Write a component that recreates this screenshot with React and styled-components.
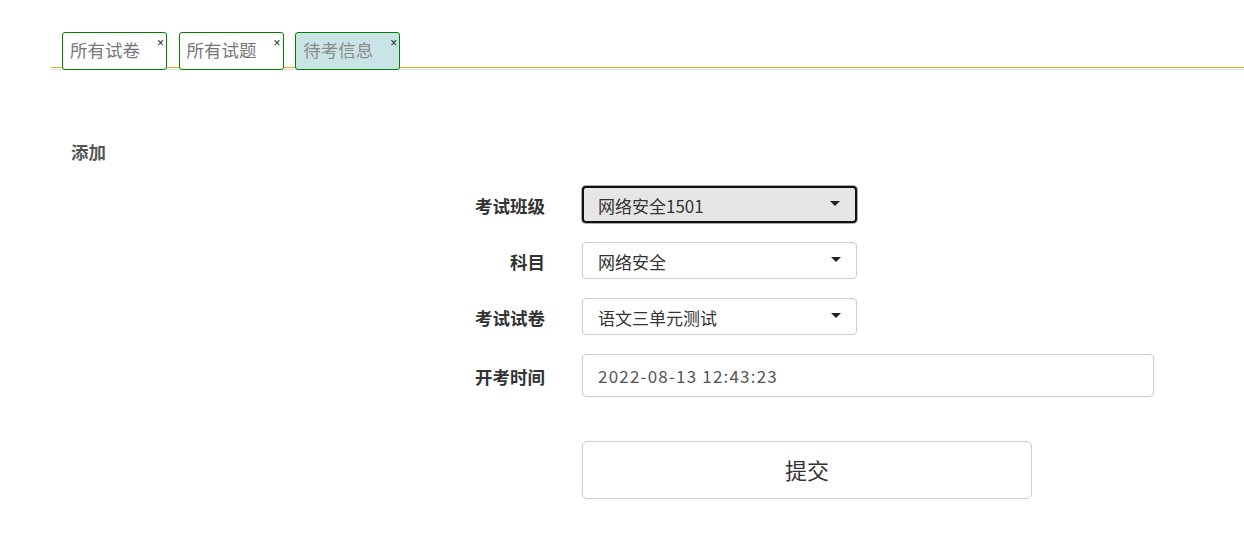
import React from "react";
import styled, { createGlobalStyle } from "styled-components";

const tabs = [
    { id: 1, name: "所有试卷" },
    { id: 2, name: "所有试题" },
    { id: 3, name: "待考信息", active: true },
];

const fields = [
    { label: "考试班级", value: "网络安全1501", focused: true },
    { label: "科目", value: "网络安全" },
    { label: "考试试卷", value: "语文三单元测试" },
];

export default function App() {
    return (
        <Page>
            <GlobalStyle />
            <TabBar>
                {tabs.map((tab) => (
                    <Tab key={tab.id} active={tab.active}>
                        {tab.name}
                        <Close>×</Close>
                    </Tab>
                ))}
            </TabBar>
            <Rule />
            <Heading>添加</Heading>
            <Form>
                {fields.map((field) => (
                    <Row key={field.label}>
                        <Label>{field.label}</Label>
                        <Select focused={field.focused}>
                            {field.value}
                            <Caret />
                        </Select>
                    </Row>
                ))}
                <Row>
                    <Label>开考时间</Label>
                    <DateInput>2022-08-13 12:43:23</DateInput>
                </Row>
                <Row>
                    <span />
                    <Submit type="button">提交</Submit>
                </Row>
            </Form>
        </Page>
    );
}

const GlobalStyle = createGlobalStyle`
    body {
        margin: 0;
        background: #fff;
        font-family: "Noto Sans CJK SC", "Noto Sans", sans-serif;
    }
`;

const Page = styled.div`
    width: 1244px;
    height: 553px;
    overflow: hidden;
    padding-top: 32px;
    box-sizing: border-box;
`;

const TabBar = styled.div`
    display: flex;
    gap: 11.6px;
    margin-left: 51px;
    padding-left: 11px;
    height: 35px;
    border-bottom: 1px solid #f0a81c;
`;

const Tab = styled.div`
    position: relative;
    z-index: 1;
    box-sizing: border-box;
    width: 105px;
    height: 38px;
    padding: 5px 0 0 7px;
    border: 1px solid #008000;
    border-radius: 3px;
    background: ${({ active }) => (active ? "#c8e4e6" : "#fff")};
    color: ${({ active }) => (active ? "#8a8a8a" : "#777")};
    font-size: 17.5px;
    line-height: 24px;
`;

const Close = styled.span`
    position: absolute;
    top: 4px;
    right: 2px;
    font-family: "Liberation Sans", sans-serif;
    font-size: 12px;
    line-height: 12px;
    color: #222;
`;

const Rule = styled.div`
    margin: 1px 0 0 51px;
    height: 1px;
    background: #e0e0e0;
`;

const Heading = styled.div`
    margin: 71px 0 0 71px;
    font-size: 17.5px;
    font-weight: bold;
    color: #555;
    line-height: 22px;
`;

const Form = styled.div`
    display: grid;
    row-gap: 19px;
    margin-top: 23px;
`;

const Row = styled.div`
    display: grid;
    grid-template-columns: 545px auto;
    column-gap: 37px;
    align-items: center;

    &:last-child {
        margin-top: 25px;
    }
`;

const Label = styled.div`
    text-align: right;
    font-size: 17.5px;
    font-weight: bold;
    color: #333;
    padding-top: 2px;
`;

const Select = styled.div`
    display: flex;
    align-items: center;
    justify-content: space-between;
    box-sizing: border-box;
    width: 275px;
    height: 37px;
    padding: 2px 15px 0;
    border: ${({ focused }) => (focused ? "2px solid #111" : "1px solid #ccc")};
    box-shadow: ${({ focused }) => (focused ? "0 0 0 1px #aaa" : "none")};
    border-radius: 4px;
    background: ${({ focused }) => (focused ? "#e6e6e6" : "#fff")};
    color: #333;
    font-size: 17px;
    padding-left: ${({ focused }) => (focused ? "14px" : "15px")};
`;

const Caret = styled.span`
    width: 0;
    height: 0;
    margin-top: -4px;
    border-left: 5px solid transparent;
    border-right: 5px solid transparent;
    border-top: 5px solid #222;
`;

const DateInput = styled.div`
    box-sizing: border-box;
    display: flex;
    align-items: center;
    width: 572px;
    height: 43px;
    padding: 0 15px;
    border: 1px solid #ccc;
    border-radius: 4px;
    color: #555;
    font-size: 17px;
    letter-spacing: 1.2px;
`;

const Submit = styled.button`
    box-sizing: border-box;
    width: 450px;
    height: 58px;
    padding-bottom: 3px;
    border: 1px solid #ccc;
    border-radius: 5px;
    background: #fff;
    color: #333;
    font-family: inherit;
    font-size: 22px;
    cursor: pointer;
`;
